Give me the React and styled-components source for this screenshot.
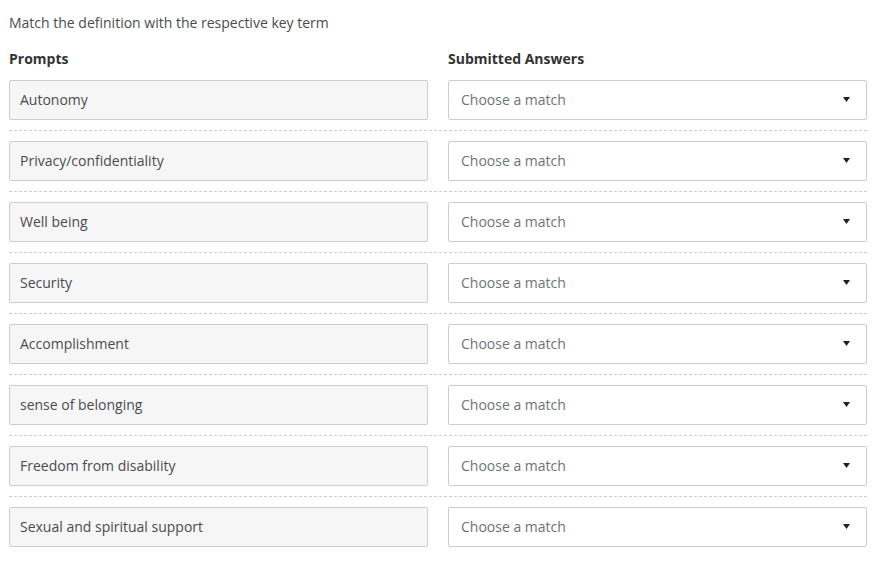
import React from 'react';
import styled, { createGlobalStyle } from 'styled-components';

const GlobalStyle = createGlobalStyle`
  html, body {
    margin: 0;
    padding: 0;
    background: #ffffff;
  }
  body {
    font-family: "Open Sans", "Liberation Sans", sans-serif;
    color: #494c4e;
  }
`;

const Page = styled.div`
  padding: 13px 9px 0 9px;
  width: 858px;
`;

const Question = styled.p`
  margin: 0 0 16px 0;
  font-size: 14px;
  line-height: 20px;
  color: #494c4e;
`;

const Grid = styled.div`
  display: grid;
  grid-template-columns: 419px 419px;
  column-gap: 20px;
`;

const ColumnHead = styled.div`
  font-size: 14px;
  font-weight: 700;
  line-height: 20px;
  color: #333333;
  margin-bottom: 11px;
`;

const Row = styled.div`
  grid-column: 1 / span 2;
  display: grid;
  grid-template-columns: 419px 419px;
  column-gap: 20px;
  padding-bottom: ${p => (p.$last ? '0' : '10px')};
  margin-bottom: ${p => (p.$last ? '0' : '10px')};
  border-bottom: ${p => (p.$last ? 'none' : '1px dashed #cfcfcf')};
`;

const Prompt = styled.div`
  box-sizing: border-box;
  height: 40px;
  display: flex;
  align-items: center;
  padding: 0 10px 2px 10px;
  background: #f6f6f6;
  border: 1px solid #cdcdcd;
  border-radius: 2px;
  font-size: 14px;
  color: #494c4e;
`;

const Select = styled.div`
  box-sizing: border-box;
  height: 40px;
  display: flex;
  align-items: center;
  justify-content: space-between;
  padding: 0 16px 2px 12px;
  background: #ffffff;
  border: 1px solid #cdcdcd;
  border-radius: 2px;
  font-size: 14px;
  color: #6e7376;
`;

const Caret = styled.svg`
  width: 7px;
  height: 5px;
  display: block;
  margin-top: 1px;
`;

const prompts = [
  'Autonomy',
  'Privacy/confidentiality',
  'Well being',
  'Security',
  'Accomplishment',
  'sense of belonging',
  'Freedom from disability',
  'Sexual and spiritual support',
];

export default function App() {
  return (
    <>
      <GlobalStyle />
      <Page>
        <Question>Match the definition with the respective key term</Question>
        <Grid>
          <ColumnHead>Prompts</ColumnHead>
          <ColumnHead>Submitted Answers</ColumnHead>
          {prompts.map((p, i) => (
            <Row key={i} $last={i === prompts.length - 1}>
              <Prompt>{p}</Prompt>
              <Select>
                <span>Choose a match</span>
                <Caret viewBox="0 0 7 5">
                  <path d="M0 0 H7 L3.5 5 Z" fill="#202122" />
                </Caret>
              </Select>
            </Row>
          ))}
        </Grid>
      </Page>
    </>
  );
}
